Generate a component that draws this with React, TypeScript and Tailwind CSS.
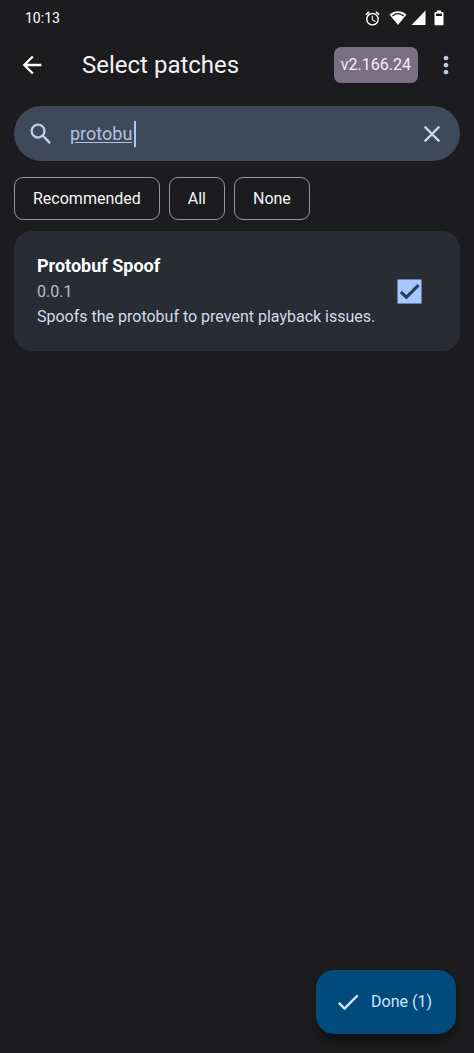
import React, { useState } from "react";
import { MdAlarm, MdArrowBack, MdCheck, MdClose, MdMoreVert, MdSearch } from "react-icons/md";

const filters = ["Recommended", "All", "None"];

const patches = [
  {
    id: "protobuf-spoof",
    name: "Protobuf Spoof",
    version: "0.0.1",
    description: "Spoofs the protobuf to prevent playback issues.",
  },
];

const WifiIcon = () => (
  <svg width="18" height="16" viewBox="0 0 18 16" aria-hidden="true">
    <path d="M0.5 4.6C5.6 0 12.4 0 17.5 4.6L9 15Z" fill="#fff" />
    <path d="M3.4 5.9C6.9 3.2 11.1 3.2 14.6 5.9" fill="none" stroke="#1c1c1e" strokeWidth="1.2" />
  </svg>
);

const SignalIcon = () => (
  <svg width="15" height="16" viewBox="0 0 15 16" aria-hidden="true">
    <path d="M14.5 0.5V15H0.5Z" fill="#fff" />
  </svg>
);

const BatteryIcon = () => (
  <svg width="10" height="16" viewBox="0 0 10 16" aria-hidden="true">
    <path d="M3 0.5H7V2H8.6Q9.5 2 9.5 2.9V14.4Q9.5 15.3 8.6 15.3H1.4Q0.5 15.3 0.5 14.4V2.9Q0.5 2 1.4 2H3Z" fill="#fff" />
    <path d="M2 3.6H8V6H2Z" fill="#1c1c1e" />
  </svg>
);

const StatusBar = () => (
  <div className="flex h-9 items-center justify-between pl-[25px] pr-[30px] text-white">
    <span className="text-sm">10:13</span>
    <div className="flex h-4 items-center gap-1">
      <MdAlarm size={17} className="mr-1" />
      <WifiIcon />
      <SignalIcon />
      <span className="ml-1">
        <BatteryIcon />
      </span>
    </div>
  </div>
);

const TopBar = () => (
  <header className="flex h-[58px] items-center pl-[18px] pr-[14px]">
    <button type="button" aria-label="Back" className="text-white">
      <MdArrowBack size={28} />
    </button>
    <h1 className="ml-9 flex-1 text-2xl text-[#f1f1f4]">Select patches</h1>
    <button type="button" className="h-9 rounded-[7px] bg-[#7b6e83] px-[7px] text-base text-[#f6effa]">
      v2.166.24
    </button>
    <button type="button" aria-label="More options" className="ml-[14px] text-[#bfcfe1]">
      <MdMoreVert size={28} />
    </button>
  </header>
);

const App = () => {
  const [query, setQuery] = useState("protobu");
  const [selected, setSelected] = useState<string[]>(["protobuf-spoof"]);

  const toggle = (id: string) =>
    setSelected((prev) => (prev.includes(id) ? prev.filter((p) => p !== id) : [...prev, id]));

  const visible = patches.filter((p) => p.name.toLowerCase().includes(query.toLowerCase()));

  return (
    <div className="flex min-h-screen flex-col bg-[#1c1c1e] font-[Roboto,sans-serif]">
      <StatusBar />
      <TopBar />

      <main className="flex flex-1 flex-col px-[14px] pt-3">
        <div className="flex h-[55px] items-center rounded-full bg-[#3e4a59] pl-[13px] pr-[14px]">
          <label htmlFor="patch-search" aria-label="Search patches">
            <MdSearch size={28} className="text-[#c0d0ec]" />
          </label>
          <div className="ml-[15px] flex flex-1 items-center">
            <input
              id="patch-search"
              type="text"
              aria-label="Search patches"
              value={query}
              onChange={(e) => setQuery(e.target.value)}
              className="field-sizing-content h-8 bg-transparent pr-[2px] text-lg text-[#b4c3df] underline underline-offset-2 caret-transparent outline-none"
            />
            <span className="h-[26px] w-[2px] bg-[#a6c8ff]" />
          </div>
          <button type="button" aria-label="Clear search" onClick={() => setQuery("")} className="text-[#c9d6e6]">
            <MdClose size={28} />
          </button>
        </div>

        {/* Quick selection */}
        <div className="mt-4 flex gap-[9px]">
          {filters.map((filter) => (
            <button
              key={filter}
              type="button"
              className="h-[43px] rounded-[9px] border border-[#96969b] px-[18px] text-base text-[#f4f4f6]"
            >
              {filter}
            </button>
          ))}
        </div>

        <ul className="mt-[11px]">
          {visible.map((patch) => (
            <li key={patch.id} className="rounded-[18px] bg-[#292d33]">
              <label htmlFor={patch.id} className="flex items-center justify-between py-[22px] pl-[23px] pr-[38px]">
                <div>
                  <h2 className="text-lg leading-[26px] font-bold text-white">{patch.name}</h2>
                  <p className="text-base leading-[25px] text-[#b5bdcb]">{patch.version}</p>
                  <p className="text-base leading-[25px] text-[#d3daea]">{patch.description}</p>
                </div>
                <span className="grid size-[25px] shrink-0">
                  <input
                    id={patch.id}
                    type="checkbox"
                    checked={selected.includes(patch.id)}
                    onChange={() => toggle(patch.id)}
                    className="peer col-start-1 row-start-1 size-[25px] appearance-none rounded-[1px] border-2 border-[#a6c8ff] checked:bg-[#a6c8ff]"
                  />
                  <MdCheck
                    size={25}
                    className="pointer-events-none invisible col-start-1 row-start-1 stroke-1 text-[#2b3d55] peer-checked:visible"
                  />
                </span>
              </label>
            </li>
          ))}
        </ul>
      </main>

      <button
        type="button"
        className="mr-[18px] mb-[19px] flex h-16 items-center gap-[9px] self-end rounded-[18px] bg-[#004a7c] pr-6 pl-[18px] text-base text-[#cfe3ff] shadow-lg shadow-black/40"
      >
        <MdCheck size={28} />
        <span>Done ({selected.length})</span>
      </button>
    </div>
  );
};

export default App;
